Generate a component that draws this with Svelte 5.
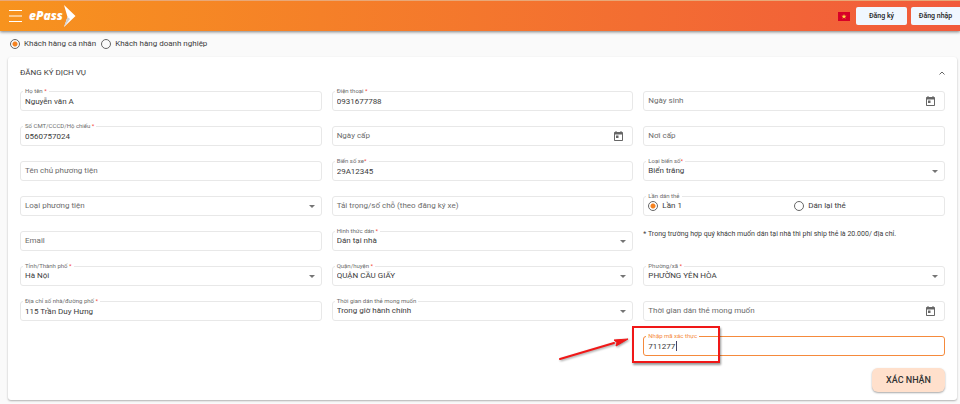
<script lang="ts">
  type Field = {
    id: string;
    kind: 'text' | 'date' | 'select' | 'radio' | 'note' | 'empty' | 'code';
    label?: string;
    star?: '' | '*' | ' *';
    value?: string;
  };

  const fields: Field[] = [
    { id: 'name', kind: 'text', label: 'Họ tên', star: ' *', value: 'Nguyễn văn A' },
    { id: 'phone', kind: 'text', label: 'Điện thoại', star: ' *', value: '0931677788' },
    { id: 'birth', kind: 'date', label: 'Ngày sinh' },
    { id: 'idno', kind: 'text', label: 'Số CMT/CCCD/Hộ chiếu', star: ' *', value: '0560757024' },
    { id: 'issued', kind: 'date', label: 'Ngày cấp' },
    { id: 'place', kind: 'text', label: 'Nơi cấp' },
    { id: 'owner', kind: 'text', label: 'Tên chủ phương tiện' },
    { id: 'plate', kind: 'text', label: 'Biển số xe', star: '*', value: '29A12345' },
    { id: 'plateType', kind: 'select', label: 'Loại biển số', star: '*', value: 'Biển trắng' },
    { id: 'vehicle', kind: 'select', label: 'Loại phương tiện' },
    { id: 'load', kind: 'text', label: 'Tải trọng/số chỗ (theo đăng ký xe)' },
    { id: 'times', kind: 'radio', label: 'Lần dán thẻ' },
    { id: 'email', kind: 'text', label: 'Email' },
    { id: 'method', kind: 'select', label: 'Hình thức dán', star: ' *', value: 'Dán tại nhà' },
    { id: 'note', kind: 'note' },
    { id: 'city', kind: 'select', label: 'Tỉnh/Thành phố', star: ' *', value: 'Hà Nội' },
    { id: 'district', kind: 'select', label: 'Quận/huyện', star: ' *', value: 'QUẬN CẦU GIẤY' },
    { id: 'ward', kind: 'select', label: 'Phường/xã', star: ' *', value: 'PHƯỜNG YÊN HÒA' },
    { id: 'address', kind: 'text', label: 'Địa chỉ số nhà/đường phố', star: ' *', value: '115 Trần Duy Hưng' },
    { id: 'slot', kind: 'select', label: 'Thời gian dán thẻ mong muốn', value: 'Trong giờ hành chính' },
    { id: 'slotDate', kind: 'date', label: 'Thời gian dán thẻ mong muốn' },
    { id: 'e1', kind: 'empty' },
    { id: 'e2', kind: 'empty' },
    { id: 'code', kind: 'code', label: 'Nhập mã xác thực', value: '711277' },
  ];

  let customer = $state('personal');
  let times = $state('first');
</script>

<header>
  <button class="menu" aria-label="Menu">
    <svg width="13" height="12" viewBox="0 0 13 12"><path d="M0 .5h13M0 6h13M0 11.500h13" stroke="#fff" stroke-width="1" /></svg>
  </button>
  <a class="logo" href="#home">
    <span>ePass</span>
    <svg width="13" height="24" viewBox="0 0 13 24">
      <path d="M1 1 L12.500 12 L1 23 L4.500 13 Z" fill="#fff" />
      <path d="M4.500 13 L1 23 L7 15 Z" fill="#cfcfd4" />
    </svg>
  </a>
  <svg class="flag" width="12" height="9" viewBox="0 0 12 9">
    <rect width="12" height="9" fill="#d80027" />
    <path d="M6 2l.6 1.800h1.900L7 4.900l.6 1.800L6 5.600 4.400 6.700 5 4.900 3.500 3.800h1.900z" fill="#ffda44" />
  </svg>
  <button class="auth">Đăng ký</button>
  <button class="auth last">Đăng nhập</button>
</header>

<main>
  <div class="types" role="radiogroup" aria-label="Loại khách hàng">
    <label><input type="radio" value="personal" bind:group={customer} />Khách hàng cá nhân</label>
    <label><input type="radio" value="business" bind:group={customer} />Khách hàng doanh nghiệp</label>
  </div>

  <form class="card">
    <div class="head">
      <h1>ĐĂNG KÝ DỊCH VỤ</h1>
      <button type="button" class="icon" aria-label="Thu gọn">
        <svg width="6" height="4" viewBox="0 0 6 4"><path d="M.5 3.500L3 1l2.500 2.500" fill="none" stroke="#666" /></svg>
      </button>
    </div>

    <div class="grid">
      {#each fields as f (f.id)}
        {#if f.kind === 'empty'}
          <div></div>
        {:else if f.kind === 'note'}
          <p class="note">* Trong trường hợp quý khách muốn dán tại nhà thì phí ship thẻ là 20.000/ địa chỉ.</p>
        {:else if f.kind === 'radio'}
          <div class="field" role="radiogroup" aria-labelledby="{f.id}-label">
            <span class="caption float" id="{f.id}-label">{f.label}</span>
            <div class="choices">
              <label><input type="radio" value="first" bind:group={times} />Lần 1</label>
              <label><input type="radio" value="again" bind:group={times} />Dán lại thẻ</label>
            </div>
          </div>
        {:else}
          <div class="field" class:active={f.kind === 'code'}>
            <label class="caption" class:float={f.value} for={f.id}>{f.label}{#if f.star}<b>{f.star}</b>{/if}</label>
            {#if f.kind === 'select'}
              <select id={f.id}><option>{f.value ?? ''}</option></select>
              <svg class="arrow" width="6" height="3" viewBox="0 0 6 3"><path d="M0 0h6L3 3z" fill="#757575" /></svg>
            {:else}
              <input id={f.id} type="text" value={f.value ?? ''} />
              {#if f.kind === 'date'}
                <button type="button" class="icon" aria-label="Chọn ngày">
                  <svg width="9" height="10" viewBox="3 1 18 20"><path fill="#666" d="M19 3h-1V1h-2v2H8V1H6v2H5c-1.110 0-2 .9-2 2v14c0 1.100.89 2 2 2h14c1.100 0 2-.9 2-2V5c0-1.100-.9-2-2-2zm0 16H5V8h14v11zM7 10h5v5H7z" /></svg>
                </button>
              {:else if f.kind === 'code'}
                <i class="caret"></i>
                <div class="frame"></div>
                <svg class="pointer" width="76" height="30" viewBox="0 0 76 30">
                  <path d="M4 24L58 8" stroke="#f01818" stroke-width="2" stroke-linecap="round" />
                  <path d="M72 4L60 11l1-3.500L58 5z" fill="#f01818" stroke="#f01818" />
                </svg>
              {/if}
            {/if}
          </div>
        {/if}
      {/each}
    </div>

    <div class="actions"><button type="button" class="submit">XÁC NHẬN</button></div>
  </form>
</main>

<style>
  :global(body) {
    background: #fafafa;
    font-family: Roboto, "Noto Sans", sans-serif;
    font-size: 8px;
    line-height: 12px;
    color: #3c3c3c;
  }
  button, input, select { font: inherit; color: inherit; margin: 0; padding: 0; border: 0; background: none; outline: 0; }
  button { cursor: pointer; }
  svg { display: block; }

  header {
    display: flex;
    align-items: center;
    height: 31px;
    box-sizing: border-box;
    padding-left: 9px;
    border-top: 1px solid #e8a878;
    background: linear-gradient(90deg, #f7931e, #f15a3c) padding-box;
    box-shadow: 0 1px 3px rgba(0, 0, 0, .5);
  }
  .logo { display: flex; align-items: center; margin: 0 auto 0 7px; color: #fff; text-decoration: none; font: italic 800 12px/16px "Open Sans", sans-serif; }
  .flag { margin-right: 6px; }
  .auth { width: 51px; height: 18px; margin-right: 4px; border-radius: 2px; background: #f0f7ff; color: #222; font-size: 7px; font-weight: 500; }
  .auth.last { width: 49px; margin-right: 0; border-radius: 2px 0 0 2px; }

  main { padding: 0 3px 4px 8px; }
  .types { display: flex; align-items: center; gap: 5px; height: 26px; padding-left: 2px; }
  label { display: flex; align-items: center; gap: 4px; }
  input[type="radio"] {
    appearance: none;
    width: 10px;
    height: 10px;
    box-sizing: border-box;
    border: 1px solid #666;
    border-radius: 50%;
  }
  input[type="radio"]:checked { background: radial-gradient(circle, #f58220 2px, transparent 3px); }

  .card { background: #fff; padding: 10px 12px 8px; border-radius: 3px; box-shadow: 0 1px 2px rgba(0, 0, 0, .3); }
  .head { display: flex; justify-content: space-between; align-items: center; margin-bottom: 12px; }
  h1 { margin: 0; font-size: 8px; font-weight: 400; line-height: 12px; }
  .grid { display: grid; grid-template-columns: repeat(3, minmax(0, 1fr)); grid-auto-rows: 20px; gap: 15px 10px; }

  .field { position: relative; display: flex; align-items: center; box-sizing: border-box; padding: 0 4px; border: 1px solid #e8e8e8; border-radius: 3px; }
  .field > input, select { flex: 1; min-width: 0; height: 18px; appearance: none; }
  .caption { position: absolute; left: 2px; top: 3px; padding: 0 2px; display: block; color: #6c6c6c; white-space: pre; pointer-events: none; }
  .caption.float { top: -4px; background: #fff; font-size: 6px; line-height: 6px; }
  b { font-weight: 400; color: #f44336; }
  .arrow { position: absolute; right: 6px; top: 8px; pointer-events: none; }
  .field .icon { margin-right: 5px; }
  .choices { flex: 1; display: grid; grid-template-columns: 1fr 1fr; }
  .note { margin: 0; font-size: 7px; line-height: 6px; }

  .field.active { border-color: #f58a3c; }
  .active .caption { color: #f58a3c; }
  .field.active > input { flex: none; width: 28px; }
  .caret { width: 1px; height: 10px; background: #446; }
  .frame { position: absolute; left: -12px; top: -11px; width: 84px; height: 33px; border: 2px solid #f01818; box-shadow: 1px 2px 2px rgba(0, 0, 0, .4); }
  .pointer { position: absolute; right: 100%; margin-right: 12px; top: -2px; filter: drop-shadow(1px 1px 1px rgba(0, 0, 0, .4)); }

  .actions { display: flex; justify-content: flex-end; margin-top: 12px; }
  .submit { width: 73px; height: 24px; border-radius: 6px; background: #ffe0cc; color: #333; font-size: 9px; font-weight: 500; box-shadow: 0 1px 2px rgba(0, 0, 0, .35); }
</style>
